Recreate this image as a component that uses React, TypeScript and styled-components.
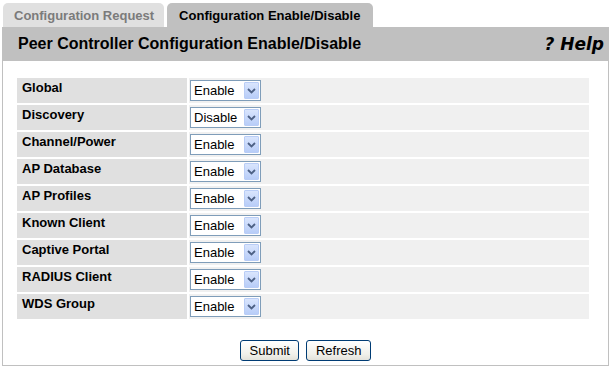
import React, { useState } from "react";
import styled, { createGlobalStyle } from "styled-components";

const GlobalStyle = createGlobalStyle`
  body {
    margin: 0;
    background: #ffffff;
    font-family: "Liberation Sans", Arial, sans-serif;
  }
`;

const Page = styled.div`
  width: 607px;
  padding: 3px 0 0 2px;
`;

const TabBar = styled.div`
  display: flex;
  gap: 3px;
  padding-left: 1px;
  height: 24px;
`;

const Tab = styled.div<{ $active?: boolean }>`
  display: flex;
  align-items: center;
  padding: ${(p) => (p.$active ? "0 13px 0 12px" : "0 10px 0 11px")};
  background: ${(p) => (p.$active ? "#c0c0c0" : "#e0e0e0")};
  color: ${(p) => (p.$active ? "#000000" : "#7b7b7b")};
  border-radius: 5px 5px 0 0;
  font-size: 13px;
  font-weight: bold;
  white-space: nowrap;
`;

const Header = styled.div`
  display: flex;
  align-items: center;
  justify-content: space-between;
  height: 34px;
  padding: 0 5px 0 16px;
  background: #c0c0c0;
`;

const Title = styled.h1`
  margin: 0;
  font-size: 16px;
  font-weight: bold;
  color: #000000;
`;

const Help = styled.a`
  font-family: "DejaVu Sans", Verdana, sans-serif;
  font-size: 17px;
  font-weight: bold;
  font-style: italic;
  color: #000000;
  text-decoration: none;
`;

const Panel = styled.div`
  border: 1px solid #c0c0c0;
  border-top: none;
  padding: 17px 19px 4px 14px;
`;

const Table = styled.div`
  display: grid;
  grid-template-columns: 170px 1fr;
  grid-auto-rows: 25px;
  gap: 2px;
`;

const Label = styled.div`
  background: #e0e0e0;
  padding: 2px 5px;
  font-size: 13px;
  line-height: 15px;
  font-weight: bold;
  color: #000000;
`;

const Value = styled.div`
  background: #f0f0f0;
  padding: 2px 1px;
`;

const SelectBox = styled.label`
  display: inline-flex;
  align-items: center;
  height: 21px;
  box-sizing: border-box;
  border: 1px solid #7f9db9;
  background: #ffffff;
  padding-right: 1px;
`;

const NativeSelect = styled.select`
  appearance: none;
  -webkit-appearance: none;
  border: none;
  outline: none;
  background: transparent;
  font-family: "Liberation Sans", Arial, sans-serif;
  font-size: 13px;
  color: #000000;
  padding: 0 0 0 3px;
  width: 53px;
  height: 19px;
`;

const ArrowButton = styled.span`
  display: flex;
  align-items: center;
  justify-content: center;
  width: 15px;
  height: 17px;
  box-sizing: border-box;
  border: 1px solid #b9cdf6;
  border-radius: 1px;
  background: linear-gradient(#d9e5fd, #b8cdf8);
`;

const Actions = styled.div`
  display: flex;
  justify-content: center;
  gap: 7px;
  margin-top: 21px;
  padding-left: 4px;
`;

const Button = styled.button`
  height: 21px;
  padding: 0 8px 0 9px;
  border: 1px solid #003c74;
  border-radius: 3px;
  background: linear-gradient(#ffffff, #f0f0ea 70%, #e3e2da);
  font-family: "Liberation Sans", Arial, sans-serif;
  font-size: 13px;
  color: #000000;
`;

const rows = [
  ["Global", "Enable"],
  ["Discovery", "Disable"],
  ["Channel/Power", "Enable"],
  ["AP Database", "Enable"],
  ["AP Profiles", "Enable"],
  ["Known Client", "Enable"],
  ["Captive Portal", "Enable"],
  ["RADIUS Client", "Enable"],
  ["WDS Group", "Enable"],
];

function Chevron() {
  return (
    <svg width="9" height="6" viewBox="0 0 9 6">
      <path d="M1 1 L4.5 4.5 L8 1" fill="none" stroke="#4d6185" strokeWidth="1.8" />
    </svg>
  );
}

function Dropdown(props: { value: string; onChange: (v: string) => void }) {
  return (
    <SelectBox>
      <NativeSelect value={props.value} onChange={(e) => props.onChange(e.target.value)}>
        <option>Enable</option>
        <option>Disable</option>
      </NativeSelect>
      <ArrowButton>
        <Chevron />
      </ArrowButton>
    </SelectBox>
  );
}

export default function App() {
  const [values, setValues] = useState<string[]>(rows.map((r) => r[1]));

  return (
    <Page>
      <GlobalStyle />
      <TabBar>
        <Tab>Configuration Request</Tab>
        <Tab $active>Configuration Enable/Disable</Tab>
      </TabBar>
      <Header>
        <Title>Peer Controller Configuration Enable/Disable</Title>
        <Help href="#">? Help</Help>
      </Header>
      <Panel>
        <Table>
          {rows.map((r, i) => (
            <React.Fragment key={r[0]}>
              <Label>{r[0]}</Label>
              <Value>
                <Dropdown
                  value={values[i]}
                  onChange={(v) => setValues(values.map((x, j) => (j === i ? v : x)))}
                />
              </Value>
            </React.Fragment>
          ))}
        </Table>
        <Actions>
          <Button>Submit</Button>
          <Button>Refresh</Button>
        </Actions>
      </Panel>
    </Page>
  );
}
